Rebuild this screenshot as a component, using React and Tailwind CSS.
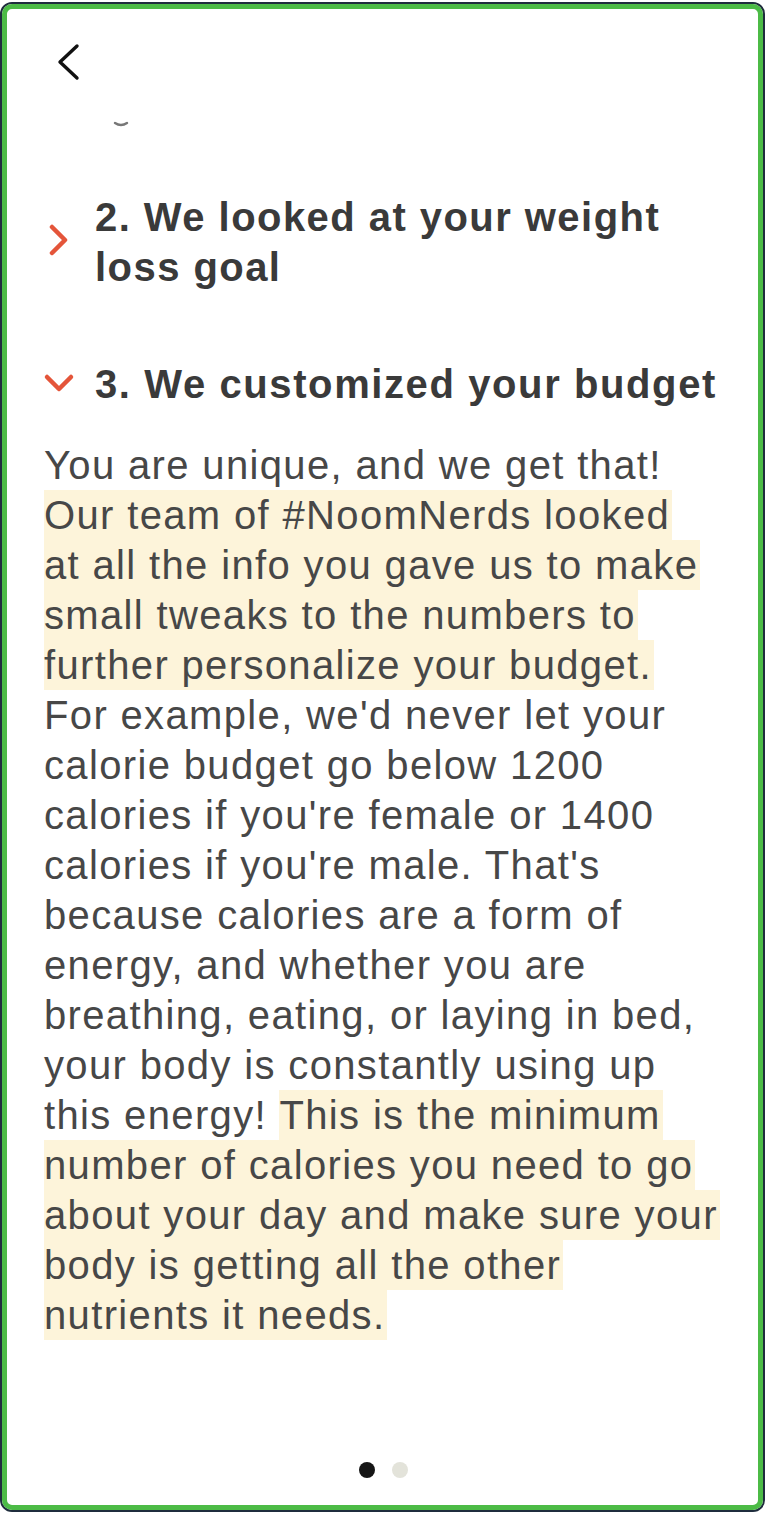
import React from "react";

const font = { fontFamily: '"Liberation Sans", Arial, sans-serif' };

// Each entry is one printed line: pairs of [text, highlighted]
const LINES = [
  [["You are unique, and we get that!", false]],
  [["Our team of #NoomNerds looked", true]],
  [["at all the info you gave us to make", true]],
  [["small tweaks to the numbers to", true]],
  [["further personalize your budget.", true]],
  [["For example, we'd never let your", false]],
  [["calorie budget go below 1200", false]],
  [["calories if you're female or 1400", false]],
  [["calories if you're male. That's", false]],
  [["because calories are a form of", false]],
  [["energy, and whether you are", false]],
  [["breathing, eating, or laying in bed,", false]],
  [["your body is constantly using up", false]],
  [["this energy!\u00a0", false], ["This is the minimum", true]],
  [["number of calories you need to go", true]],
  [["about your day and make sure your", true]],
  [["body is getting all the other", true]],
  [["nutrients it needs.", true]],
];

export default function App() {
  return (
    <div className="w-[768px] h-[1515px] bg-white pt-[2px]" style={font}>
      <div className="w-[765px] h-[1510px] rounded-[12px] border-2 border-[#1f2d3d]">
        <div className="h-full rounded-[10px] border-[5px] border-[#4cbb46] bg-white flex flex-col">
          {/* top bar with back arrow */}
          <div className="h-[100px] pl-[48px] pt-[33px]">
            <svg width="28" height="40" viewBox="0 0 28 40" fill="none">
              <polyline
                points="22,4 5,20 22,36"
                stroke="#111"
                strokeWidth="3.4"
                strokeLinecap="round"
                strokeLinejoin="round"
              />
            </svg>
          </div>
          {/* clipped descender of the line scrolled above */}
          <div className="pl-[106px] h-[83px]">
            <svg width="16" height="8" viewBox="0 0 16 8" className="mt-[12px]">
              <path d="M2 2 Q8 6 14 2" stroke="#777" strokeWidth="2.4" fill="none" strokeLinecap="round" />
            </svg>
          </div>

          {/* section 2 (collapsed) */}
          <div className="flex items-start">
            <div className="w-[88px] pl-[37px] pt-[31px] shrink-0">
              <svg width="24" height="34" viewBox="0 0 24 34" fill="none">
                <polyline
                  points="8,4 21,17 8,30"
                  stroke="#e4553a"
                  strokeWidth="4.5"
                  strokeLinecap="round"
                  strokeLinejoin="round"
                />
              </svg>
            </div>
            <h2 className="text-[40px] leading-[50px] font-bold text-[#3a3a3a] tracking-[1.45px]">
              2. We looked at your weight
              <br />
              loss goal
            </h2>
          </div>

          {/* section 3 (expanded) */}
          <div className="flex items-start mt-[67px]">
            <div className="w-[88px] pl-[36px] pt-[13px] shrink-0">
              <svg width="32" height="24" viewBox="0 0 32 24" fill="none">
                <polyline
                  points="4,5 16,17 28,5"
                  stroke="#e4553a"
                  strokeWidth="4.5"
                  strokeLinecap="round"
                  strokeLinejoin="round"
                />
              </svg>
            </div>
            <h2 className="text-[40px] leading-[50px] font-bold text-[#3a3a3a] tracking-[1.6px] whitespace-nowrap">
              3. We customized your budget
            </h2>
          </div>

          <div className="mt-[31px] pl-[37px] text-[40px] leading-[50px] text-[#474747] tracking-[1.35px]">
            {LINES.map((line, i) => (
              <div key={i} className="h-[50px] whitespace-nowrap">
                {line.map(([t, hl], j) =>
                  hl ? (
                    <span key={j} className="inline-block h-[50px] bg-[#fdf4da] pr-[2px]">
                      {t}
                    </span>
                  ) : (
                    <span key={j}>{t}</span>
                  )
                )}
              </div>
            ))}
          </div>

          {/* pager dots */}
          <div className="mt-auto mb-[27px] flex justify-center gap-[17px] pl-[1px]">
            <span className="w-[16px] h-[16px] rounded-full bg-[#161616]" />
            <span className="w-[16px] h-[16px] rounded-full bg-[#e3e3da]" />
          </div>
        </div>
      </div>
    </div>
  );
}
